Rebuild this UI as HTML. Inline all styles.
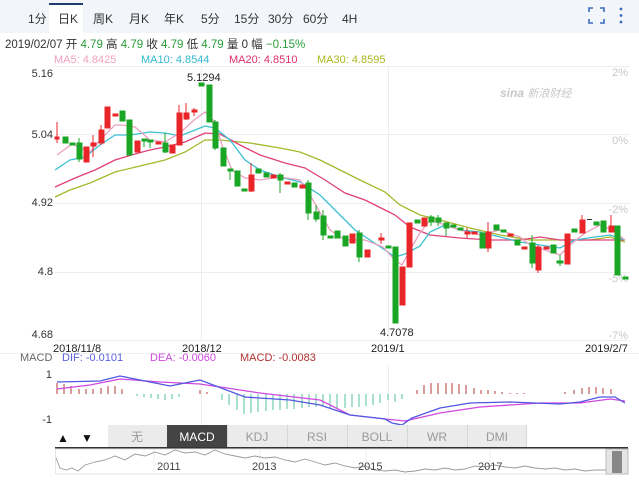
<!DOCTYPE html>
<html><head><meta charset="utf-8"><style>
body{margin:0;background:#fff;font-family:"Liberation Sans","Noto Sans CJK SC",sans-serif;}
svg{display:block}
</style></head><body>
<svg width="639" height="480" xmlns="http://www.w3.org/2000/svg" font-family="Liberation Sans, Noto Sans CJK SC, sans-serif">
<rect width="639" height="480" fill="#fff"/>
<!-- top bar -->
<rect x="0" y="0" width="639" height="33" fill="#f2f5fa"/>
<rect x="49" y="3" width="34" height="30" fill="#fff"/>
<rect x="49" y="3" width="34" height="2" fill="#1f3d6e"/>
<g font-size="12" fill="#333">
<text x="28" y="23">1分</text><text x="58" y="23">日K</text><text x="93" y="23">周K</text><text x="129" y="23">月K</text><text x="164" y="23">年K</text><text x="201" y="23">5分</text><text x="234" y="23">15分</text><text x="268" y="23">30分</text><text x="303" y="23">60分</text><text x="342" y="23">4H</text>
</g>
<g stroke="#3a6bbf" stroke-width="1.6" fill="none">
<path d="M589 12v-4h4M600 8h4v4M604 19v4h-4M593 23h-4v-4"/>
</g>
<g fill="#3a6bbf"><circle cx="621" cy="9" r="1.4"/><circle cx="621" cy="15.5" r="1.4"/><circle cx="621" cy="22" r="1.4"/></g>
<!-- header -->
<text x="5" y="48" font-size="11.5" fill="#333">2019/02/07 开 <tspan fill="#2a9d3a">4.79</tspan> 高 <tspan fill="#2a9d3a">4.79</tspan> 收 <tspan fill="#2a9d3a">4.79</tspan> 低 <tspan fill="#2a9d3a">4.79</tspan> 量 0 幅 <tspan fill="#2a9d3a">−0.15%</tspan></text>
<g font-size="11"><text x="54" y="63" fill="#f0a0c0">MA5: 4.8425</text><text x="141" y="63" fill="#30b8d0">MA10: 4.8544</text><text x="229" y="63" fill="#e0306a">MA20: 4.8510</text><text x="317" y="63" fill="#a8b820">MA30: 4.8595</text></g>
<!-- grid -->
<g stroke="#eeeeee" stroke-width="1">
<path d="M55 66.5H630M55 134.5H630M55 203.5H630M55 272.5H630M55 340.5H630M201.5 66V340M388.5 66V340"/>
</g>
<g font-size="11" fill="#333" text-anchor="end"><text x="53" y="77">5.16</text><text x="53" y="138">5.04</text><text x="53" y="206">4.92</text><text x="53" y="275">4.8</text><text x="53" y="338">4.68</text></g>
<g font-size="11" fill="#c8c8c8" text-anchor="end"><text x="628" y="76">2%</text><text x="628" y="144">0%</text><text x="628" y="213">-2%</text><text x="628" y="282">-5%</text><text x="628" y="339">-7%</text></g>
<text x="500" y="97" font-size="12" fill="#c8c8c8" font-style="italic" font-weight="bold">sina <tspan font-weight="normal" font-size="11">新浪财经</tspan></text>
<!-- MA lines -->
<g fill="none" stroke-width="1.3">
<polyline stroke="#a6b82c" points="55,197 70,190 90,183 115,172 140,166 165,160 185,152 205,140 220,140 250,143 280,148 300,152 320,160 340,170 360,180 385,192 400,205 420,215 440,220 470,228 500,235 530,240 560,240 590,240 610,237 625,242"/>
<polyline stroke="#e0407a" points="55,187 75,178 95,170 115,160 135,154 150,150 165,147 185,142 205,133 220,134 240,145 260,155 285,163 305,168 325,180 345,193 365,200 385,210 395,215 410,227 430,235 460,238 490,240 520,240 540,237 560,240 580,240 600,240 615,240 625,240"/>
<polyline stroke="#3cc0d0" points="55,170 70,160 85,157 100,145 115,135 130,135 150,132 165,133 180,136 195,130 205,126 215,128 230,140 245,160 260,170 280,177 300,182 320,195 340,215 355,230 370,240 385,250 395,257 405,254 420,246 430,232 445,225 460,230 480,232 500,237 520,242 540,245 560,248 575,240 595,237 610,235 625,240"/>
<polyline stroke="#eaa0c0" points="57,155 72,144 90,152 100,140 115,125 122,125 135,127 150,140 165,142 180,133 194,120 205,112 215,122 222,145 232,170 245,178 260,180 280,177 300,180 310,195 330,230 345,240 365,240 383,247 395,260 402,265 410,250 420,233 430,220 445,225 460,230 480,235 500,230 520,237 530,245 545,250 560,255 570,245 585,233 600,225 612,230 625,240"/>
</g>
<!-- candles -->
<g stroke-width="1">
<g fill="#e8262a" stroke="#e8262a">
<line x1="57" y1="122" x2="57" y2="143"/><rect x="55" y="137" width="4" height="2"/>
<rect x="84" y="147" width="5" height="15"/>
<line x1="93" y1="135" x2="93" y2="157"/><rect x="91" y="143" width="5" height="3"/>
<line x1="101" y1="125" x2="101" y2="145"/><rect x="99" y="130" width="5" height="13"/>
<rect x="105" y="107" width="5" height="21"/>
<rect x="113" y="114" width="5" height="2"/>
<rect x="135" y="141" width="5" height="11"/>
<rect x="156" y="142" width="5" height="2"/>
<rect x="170" y="145" width="5" height="8"/>
<line x1="179" y1="105" x2="179" y2="145"/><rect x="177" y="113" width="5" height="32"/>
<line x1="186" y1="103" x2="186" y2="120"/><rect x="184" y="113" width="5" height="6"/>
<line x1="194" y1="108" x2="194" y2="116"/><rect x="192" y="110" width="5" height="2"/>
<line x1="251" y1="163" x2="251" y2="192"/><rect x="249" y="175" width="5" height="16"/>
<rect x="271" y="175" width="5" height="3"/>
<rect x="285" y="182" width="5" height="2"/>
<rect x="300" y="185" width="5" height="3"/>
<rect x="350" y="234" width="5" height="9"/>
<rect x="365" y="250" width="5" height="7"/>
<line x1="381" y1="233" x2="381" y2="244"/><rect x="379" y="238" width="5" height="2"/>
<rect x="400" y="267" width="5" height="38"/>
<rect x="407" y="223" width="5" height="44"/>
<rect x="422" y="218" width="5" height="8"/>
<line x1="467" y1="228" x2="467" y2="238"/><rect x="465" y="232" width="5" height="2"/>
<rect x="472" y="232" width="5" height="2"/>
<line x1="488" y1="222" x2="488" y2="252"/><rect x="486" y="232" width="5" height="16"/>
<rect x="508" y="234" width="5" height="2"/>
<rect x="522" y="247" width="5" height="2"/>
<line x1="538" y1="245" x2="538" y2="273"/><rect x="536" y="247" width="5" height="23"/>
<rect x="544" y="247" width="5" height="2"/>
<rect x="565" y="234" width="5" height="30"/>
<line x1="582" y1="215" x2="582" y2="233"/><rect x="580" y="220" width="5" height="13"/>
<line x1="611" y1="215" x2="611" y2="232"/><rect x="609" y="226" width="5" height="6"/>
</g>
<g fill="#1aa625" stroke="#1aa625">
<rect x="63" y="137" width="5" height="6"/>
<rect x="70" y="143" width="5" height="2"/>
<line x1="79" y1="138" x2="79" y2="162"/><rect x="77" y="143" width="5" height="16"/>
<rect x="120" y="111" width="5" height="10"/>
<rect x="127" y="120" width="5" height="35"/>
<rect x="142" y="139" width="5" height="2"/><line x1="144" y1="139" x2="144" y2="147"/>
<rect x="148" y="140" width="5" height="2"/><line x1="150" y1="140" x2="150" y2="148"/>
<line x1="165" y1="133" x2="165" y2="153"/><rect x="163" y="143" width="5" height="9"/>
<rect x="199" y="83" width="5" height="3"/>
<rect x="207" y="85" width="5" height="37"/>
<line x1="215" y1="120" x2="215" y2="150"/><rect x="213" y="122" width="5" height="26"/>
<rect x="221" y="148" width="5" height="18"/>
<rect x="228" y="169" width="5" height="2"/><line x1="230" y1="169" x2="230" y2="180"/>
<rect x="235" y="171" width="5" height="15"/>
<rect x="242" y="189" width="5" height="2"/>
<rect x="256" y="169" width="5" height="4"/>
<rect x="264" y="173" width="5" height="4"/>
<line x1="280" y1="173" x2="280" y2="193"/><rect x="278" y="175" width="5" height="5"/>
<rect x="292" y="183" width="5" height="4"/>
<line x1="308" y1="180" x2="308" y2="220"/><rect x="306" y="183" width="5" height="30"/>
<line x1="316" y1="205" x2="316" y2="222"/><rect x="314" y="212" width="5" height="7"/>
<line x1="323" y1="210" x2="323" y2="240"/><rect x="321" y="216" width="5" height="19"/>
<rect x="328" y="236" width="5" height="2"/>
<rect x="335" y="231" width="5" height="7"/>
<rect x="343" y="236" width="5" height="10"/>
<line x1="359" y1="230" x2="359" y2="262"/><rect x="357" y="233" width="5" height="24"/>
<rect x="386" y="246" width="5" height="2"/>
<rect x="393" y="247" width="5" height="76"/>
<rect x="415" y="220" width="5" height="3"/>
<line x1="431" y1="215" x2="431" y2="226"/><rect x="429" y="217" width="5" height="5"/>
<line x1="438" y1="215" x2="438" y2="226"/><rect x="436" y="218" width="5" height="4"/>
<line x1="446" y1="223" x2="446" y2="236"/><rect x="444" y="223" width="5" height="5"/>
<rect x="451" y="225" width="5" height="2"/>
<rect x="458" y="228" width="5" height="2"/>
<rect x="480" y="233" width="5" height="15"/>
<rect x="494" y="225" width="5" height="5"/>
<rect x="501" y="230" width="5" height="2"/>
<rect x="515" y="240" width="5" height="5"/>
<line x1="532" y1="235" x2="532" y2="268"/><rect x="530" y="243" width="5" height="20"/>
<rect x="551" y="245" width="5" height="8"/>
<line x1="560" y1="255" x2="560" y2="266"/><rect x="557" y="261" width="6" height="2"/>
<rect x="572" y="229" width="5" height="3"/>
<rect x="594" y="222" width="5" height="3"/>
<rect x="601" y="221" width="5" height="11"/>
<rect x="615" y="226" width="5" height="49"/>
<rect x="623" y="277" width="5" height="2"/>
</g>
<rect x="587" y="219" width="5" height="1" fill="#333"/>
</g>
<text x="187" y="81" font-size="11" fill="#222">5.1294</text>
<text x="380" y="336" font-size="11" fill="#222">4.7078</text>
<!-- date labels -->
<g font-size="11" fill="#222"><text x="53" y="352">2018/11/8</text><text x="182" y="352">2018/12</text><text x="371" y="352">2019/1</text><text x="585" y="352">2019/2/7</text></g>
<line x1="0" y1="353.5" x2="639" y2="353.5" stroke="#f0f0f0"/>
<!-- MACD panel -->
<g font-size="11"><text x="20" y="361" fill="#666">MACD</text><text x="62" y="361" fill="#5860e0">DIF: -0.0101</text><text x="150" y="361" fill="#d048e0">DEA: -0.0060</text><text x="240" y="361" fill="#b03030">MACD: -0.0083</text></g>
<g font-size="11" fill="#333" text-anchor="end"><text x="52" y="378">1</text><text x="52" y="423">-1</text></g>
<line x1="201.5" y1="366" x2="201.5" y2="425" stroke="#eeeeee"/><line x1="388.5" y1="366" x2="388.5" y2="425" stroke="#eeeeee"/>
<g stroke="#b83a3a" stroke-width="1">
<path d="M57 394V383M64 394V384M71 394V386M79 394V389M86 394V389M93 394V389M101 394V388M108 394V386M115 394V386M122 394V389M200 394V390M207 394V392M417 394V390M424 394V385M431 394V383M438 394V383M446 394V383M452 394V383M459 394V384M466 394V385M474 394V388M481 394V390M488 394V390M495 394V391M502 394V392M510 394V393M517 394V393M524 394V393M565 394V392M574 394V390M582 394V388M589 394V387M596 394V387M603 394V388M611 394V389"/>
</g>
<g stroke="#55c0a0" stroke-width="1">
<path d="M137 394V396M144 394V397M151 394V398M158 394V399M165 394V400M172 394V399M179 394V397M222 394V400M229 394V405M237 394V410M244 394V414M251 394V413M258 394V412M266 394V411M273 394V410M280 394V410M287 394V409M294 394V409M302 394V408M309 394V407M316 394V407M323 394V406M330 394V408M337 394V409M345 394V408M352 394V407M359 394V407M366 394V406M373 394V405M380 394V403M388 394V400M395 394V402M402 394V399"/>
</g>
<polyline fill="none" stroke="#d048e0" stroke-width="1.3" points="57,389 90,385 120,379 160,382 200,384 260,393 320,400 350,415 385,419 405,421 440,413 480,407 540,403 580,403 610,399 625,401"/>
<polyline fill="none" stroke="#5058e0" stroke-width="1.3" points="57,382 100,381 120,376 170,386 200,380 245,397 290,400 320,405 350,415 385,419 392,423 402,425 412,418 440,408 470,403 510,402 560,404 580,402 600,397 615,397 625,403"/>
<!-- tabs -->
<g font-size="12">
<text x="57" y="442" fill="#111">▲</text><text x="81" y="442" fill="#111">▼</text>
<rect x="108" y="425" width="419" height="22" fill="#ebebeb"/>
<g stroke="#d6d6d6"><path d="M167.5 425V447M227.5 425V447M287.5 425V447M347.5 425V447M407.5 425V447M467.5 425V447M526.5 425V447"/></g>
<rect x="167" y="425" width="60" height="22" fill="#444"/>
<g text-anchor="middle" fill="#999"><text x="137" y="441">无</text><text x="197" y="441" fill="#fff">MACD</text><text x="257" y="441">KDJ</text><text x="317" y="441">RSI</text><text x="377" y="441">BOLL</text><text x="437" y="441">WR</text><text x="497" y="441">DMI</text></g>
</g>
<!-- timeline -->
<rect x="55" y="447" width="573" height="2" fill="#333"/>
<rect x="55.5" y="449" width="572" height="25" fill="none" stroke="#e6e6e6"/>
<line x1="154" y1="449" x2="154" y2="474" stroke="#eee"/><line x1="260" y1="449" x2="260" y2="474" stroke="#eee"/><line x1="366" y1="449" x2="366" y2="474" stroke="#eee"/><line x1="490" y1="449" x2="490" y2="474" stroke="#eee"/>
<polyline fill="none" stroke="#999" stroke-width="0.9" points="56,458 60,468 66,470 72,468 78,471 85,465 95,462 105,460 115,456 125,460 135,454 145,456 155,452 165,455 175,450 185,453 195,452 205,455 215,450 225,454 235,456 245,458 255,456 265,458 275,457 285,460 295,462 305,459 315,462 325,465 335,463 345,466 355,468 365,466 375,470 385,471 395,470 405,472 415,471 425,469 435,470 445,468 455,470 465,469 475,466 485,467 495,465 505,467 515,468 525,466 535,468 545,469 555,468 565,470 575,469 585,471 595,470 606,470"/>
<g font-size="11" fill="#444"><text x="157" y="470">2011</text><text x="252" y="470">2013</text><text x="358" y="470">2015</text><text x="478" y="470">2017</text></g>
<rect x="606" y="449" width="22" height="25" fill="#e5e5e5" stroke="#bbb"/>
<rect x="612" y="451" width="10" height="22" fill="#888"/>
</svg>
</body></html>
